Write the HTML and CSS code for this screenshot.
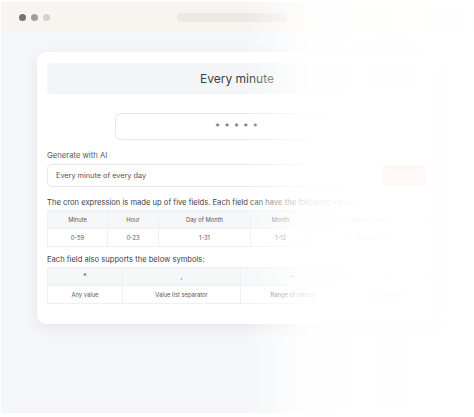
FILE: index.html
```html
<!DOCTYPE html>
<html lang="en">
<head>
<meta charset="utf-8">
<title>Cron expression</title>
<link rel="stylesheet" href="styles.css">
</head>
<body>
<div class="window">
  <div class="topbar">
    <span class="dot d1"></span>
    <span class="dot d2"></span>
    <span class="dot d3"></span>
    <span class="address"></span>
  </div>
  <div class="content">
    <div class="card">
      <div class="summary">Every minute</div>
      <div class="cron">* * * * *</div>
      <div class="label">Generate with AI</div>
      <div class="ai-row">
        <div class="ai-input">Every minute of every day</div>
        <div class="ai-btn">Generate</div>
      </div>
      <p class="label para">The cron expression is made up of five fields. Each field can have the following values:</p>
      <table class="grid fields">
        <colgroup>
          <col style="width:60px"><col style="width:51px"><col style="width:92px"><col style="width:60px"><col>
        </colgroup>
        <tr class="head"><td>Minute</td><td>Hour</td><td>Day of Month</td><td>Month</td><td>Day of Week</td></tr>
        <tr><td>0-59</td><td>0-23</td><td>1-31</td><td>1-12</td><td>0-7 (Sun is 0 or 7)</td></tr>
      </table>
      <p class="label para2">Each field also supports the below symbols:</p>
      <table class="grid symbols">
        <colgroup>
          <col style="width:75px"><col style="width:118px"><col style="width:104px"><col>
        </colgroup>
        <tr class="head"><td>*</td><td>,</td><td>-</td><td>/</td></tr>
        <tr><td>Any value</td><td>Value list separator</td><td>Range of values</td><td>Step values</td></tr>
      </table>
    </div>
  </div>
</div>
<div class="fade"></div>
</body>
</html>
```

FILE: styles.css
```css
html, body {
  margin: 0;
  padding: 0;
  background: #ffffff;
  font-family: Inter, "Liberation Sans", sans-serif;
  color: #3f4247;
}

.window {
  margin: 2px 0 0 1px;
  height: 411px;
  background: #f5f6f9;
  overflow: hidden;
}

.topbar {
  height: 30px;
  background: #f8f4f0;
  display: flex;
  align-items: center;
  padding-left: 18px;
  gap: 5px;
}

.dot {
  width: 7px;
  height: 7px;
  border-radius: 50%;
}
.d1 { background: #737373; }
.d2 { background: #a0a0a0; }
.d3 { background: #d3d3d3; }

.address {
  margin-left: 122px;
  width: 110px;
  height: 9px;
  border-radius: 3px;
  background: #ece8e4;
}

.content {
  padding: 20px 0 0 36px;
}

.card {
  width: 380px;
  background: #ffffff;
  border-radius: 9px;
  padding: 11px 10px 20px;
  box-shadow: 0 4px 14px rgba(30, 40, 60, 0.07);
}

.summary {
  height: 31px;
  background: #f4f5f7;
  border-radius: 4px;
  display: flex;
  align-items: center;
  justify-content: center;
  font-size: 12px;
  color: #3c3f44;
}

.cron {
  width: 242px;
  height: 25px;
  margin: 19px auto 0;
  border: 1px solid #e7e8eb;
  border-radius: 6px;
  display: flex;
  align-items: center;
  justify-content: center;
  font-size: 9px;
  letter-spacing: 1.2px;
  color: #50535a;
}

.label {
  margin: 10px 0 0;
  font-size: 7.7px;
  line-height: 12px;
  color: #55585e;
}

.ai-row {
  margin-top: 2px;
  display: flex;
  gap: 10px;
  align-items: center;
}

.ai-input {
  flex: 1;
  height: 21px;
  border: 1px solid #e7e8eb;
  border-radius: 5px;
  padding-left: 8px;
  display: flex;
  align-items: center;
  font-size: 7.3px;
  color: #505359;
}

.ai-btn {
  width: 45px;
  height: 21px;
  border-radius: 4px;
  background: #f0601c;
  color: #ffffff;
  font-size: 6.5px;
  display: flex;
  align-items: center;
  justify-content: center;
}

.para {
  font-size: 7.6px;
  color: #3f4247;
}

.para2 {
  margin-top: 7px;
  font-size: 7.6px;
  color: #3f4247;
}

.grid {
  width: 100%;
  margin-top: 1px;
  border-collapse: collapse;
  table-layout: fixed;
}

.grid td {
  height: 17px;
  padding: 0;
  border: 1px solid #eef0f2;
  text-align: center;
  font-size: 5.8px;
  color: #55585e;
}

.grid .head td {
  background: #f6f7f9;
}

.symbols .head td {
  font-size: 7.5px;
}

.fade {
  position: absolute;
  top: 0;
  left: 0;
  width: 474px;
  height: 417px;
  pointer-events: none;
  background: linear-gradient(to right,
    rgba(255, 255, 255, 0) 0px,
    rgba(255, 255, 255, 0) 245px,
    rgba(255, 255, 255, 0.55) 280px,
    rgba(255, 255, 255, 0.9) 310px,
    rgba(255, 255, 255, 0.96) 350px,
    rgba(255, 255, 255, 0.97) 474px);
}
```
